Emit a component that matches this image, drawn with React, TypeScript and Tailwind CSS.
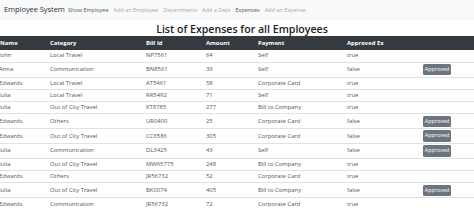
import React from "react";

type Expense = {
  name: string;
  category: string;
  billId: string;
  amount: number;
  payment: string;
  approved: boolean;
};

const expenses: Expense[] = [
  { name: "John", category: "Local Travel", billId: "NP7561", amount: 64, payment: "Self", approved: true },
  { name: "Anna", category: "Communication", billId: "BN8561", amount: 39, payment: "Self", approved: false },
  { name: "Edwards", category: "Local Travel", billId: "AT5461", amount: 58, payment: "Corporate Card", approved: true },
  { name: "Julia", category: "Local Travel", billId: "RR5492", amount: 71, payment: "Self", approved: true },
  { name: "Julia", category: "Out of City Travel", billId: "KT8785", amount: 277, payment: "Bill to Company", approved: true },
  { name: "Edwards", category: "Others", billId: "UR0400", amount: 25, payment: "Corporate Card", approved: false },
  { name: "Edwards", category: "Out of City Travel", billId: "CC6586", amount: 305, payment: "Corporate Card", approved: false },
  { name: "Julia", category: "Communication", billId: "DL3425", amount: 43, payment: "Self", approved: false },
  { name: "Julia", category: "Out of City Travel", billId: "MW65775", amount: 248, payment: "Bill to Company", approved: true },
  { name: "Edwards", category: "Others", billId: "JR56732", amount: 52, payment: "Corporate Card", approved: true },
  { name: "Julia", category: "Out of City Travel", billId: "BK0074", amount: 405, payment: "Bill to Company", approved: false },
  { name: "Edwards", category: "Communication", billId: "JR56732", amount: 72, payment: "Corporate Card", approved: true },
];

const navLinks = [
  { label: "Show Employee", active: true },
  { label: "Add an Employee", active: false },
  { label: "Departments", active: false },
  { label: "Add a Dept", active: false },
  { label: "Expenses", active: true },
  { label: "Add an Expense", active: false },
];

export default function App() {
  return (
    <div className="w-[474px] h-[210px] overflow-hidden bg-white font-['Open_Sans',sans-serif] text-[#212529]">
      {/* navbar */}
      <nav className="h-[20px] bg-[#f8f9fa] flex items-center pl-[4px]">
        <span className="text-[7.6px] tracking-[-0.1px] text-[#333] w-[64px]">Employee System</span>
        <div className="flex gap-[5px]">
          {navLinks.map((link) => (
            <a
              key={link.label}
              className={`text-[5.5px] ${link.active ? "text-[#555]" : "text-[#a9a9a9]"}`}
            >
              {link.label}
            </a>
          ))}
        </div>
      </nav>

      <h1 className="text-center text-[10.6px] leading-[14px] font-semibold text-[#222] mt-[2px] pl-[10px]">
        List of Expenses for all Employees
      </h1>

      <table className="w-[474px] table-fixed border-collapse text-[5.9px] leading-[7px]">
        <colgroup>
          <col className="w-[49px]" />
          <col className="w-[96px]" />
          <col className="w-[60px]" />
          <col className="w-[52px]" />
          <col className="w-[89px]" />
          <col className="w-[76px]" />
          <col className="w-[52px]" />
        </colgroup>
        <thead>
          <tr className="bg-[#343a40] text-white font-bold h-[14px]">
            <th className="text-left pl-0">Name</th>
            <th className="text-left pl-[1px]">Category</th>
            <th className="text-left pl-[1px]">Bill Id</th>
            <th className="text-left pl-[1px]">Amount</th>
            <th className="text-left pl-[1px]">Payment</th>
            <th className="text-left pl-[1px]">Approved Ex</th>
            <th />
          </tr>
        </thead>
        <tbody className="text-[#555]">
          {expenses.map((e, i) => {
            const h = e.approved ? "h-[12.3px]" : "h-[14.8px]";
            return (
              <tr key={i} className={`${h} border-t border-[#dee2e6] first:border-t-0`}>
                <td className="p-0 -indent-[1px]">{e.name}</td>
                <td className="p-0 pl-[1px]">{e.category}</td>
                <td className="p-0 pl-[1px]">{e.billId}</td>
                <td className="p-0 pl-[1px]">{e.amount}</td>
                <td className="p-0 pl-[1px]">{e.payment}</td>
                <td className="p-0 pl-[1px]">{e.approved ? "true" : "false"}</td>
                <td className="p-0 pl-[1px]">
                  {!e.approved && (
                    <button className="block w-[28px] h-[11.5px] rounded-[1.5px] bg-[#6c757d] text-white text-[5.4px] leading-none">
                      Approved
                    </button>
                  )}
                </td>
              </tr>
            );
          })}
        </tbody>
      </table>
    </div>
  );
}
